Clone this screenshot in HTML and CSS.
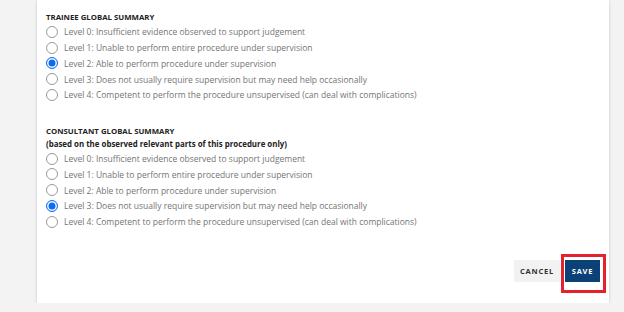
FILE: index.html
```html
<!DOCTYPE html>
<html lang="en">
<head>
    <meta charset="UTF-8">
    <meta name="viewport" content="width=device-width, initial-scale=1.0">
    <title>Global summary</title>
    <link rel="stylesheet" href="styles.css">
</head>
<body>
    <div class="card">

        <!-- TRAINEE -->
        <fieldset class="summary">
            <h3 class="summary__title">Trainee global summary</h3>
            <label class="option"><span class="radio"></span>Level 0: Insufficient evidence observed to support judgement</label>
            <label class="option"><span class="radio"></span>Level 1: Unable to perform entire procedure under supervision</label>
            <label class="option"><span class="radio radio--checked"></span>Level 2: Able to perform procedure under supervision</label>
            <label class="option"><span class="radio"></span>Level 3: Does not usually require supervision but may need help occasionally</label>
            <label class="option"><span class="radio"></span>Level 4: Competent to perform the procedure unsupervised (can deal with complications)</label>
        </fieldset>

        <!-- CONSULTANT -->
        <fieldset class="summary summary--second">
            <h3 class="summary__title">Consultant global summary</h3>
            <p class="summary__sub">(based on the observed relevant parts of this procedure only)</p>
            <label class="option"><span class="radio"></span>Level 0: Insufficient evidence observed to support judgement</label>
            <label class="option"><span class="radio"></span>Level 1: Unable to perform entire procedure under supervision</label>
            <label class="option"><span class="radio"></span>Level 2: Able to perform procedure under supervision</label>
            <label class="option"><span class="radio radio--checked"></span>Level 3: Does not usually require supervision but may need help occasionally</label>
            <label class="option"><span class="radio"></span>Level 4: Competent to perform the procedure unsupervised (can deal with complications)</label>
        </fieldset>

        <div class="actions">
            <button class="btn btn--cancel">Cancel</button>
            <button class="btn btn--save">Save</button>
            <span class="highlight"></span>
        </div>
    </div>
</body>
</html>
```

FILE: styles.css
```css
body {
    margin: 0;
    background-color: #f3f3f3;
    font-family: "Open Sans", "Liberation Sans", sans-serif;
}

.card {
    margin-left: 37px;
    width: 554px;
    padding: 11px 9px 21px;
    background-color: white;
    box-shadow: 0 1px 3px rgba(0, 0, 0, 0.18);
}

.summary {
    margin: 0;
    padding: 0;
    border: 0;
}
.summary--second {
    margin-top: 22px;
}
.summary__title {
    margin: 0 0 1px;
    font-size: 7.8px;
    line-height: 12px;
    font-weight: 700;
    text-transform: uppercase;
    color: #222;
}
.summary__sub {
    margin: 1px 0 1px;
    font-size: 7.9px;
    line-height: 12px;
    font-weight: 700;
    color: #222;
}

.option {
    display: flex;
    align-items: center;
    gap: 6px;
    height: 15.75px;
    font-size: 8.5px;
    color: #757575;
    white-space: nowrap;
}

.radio {
    flex: none;
    box-sizing: border-box;
    width: 12px;
    height: 12px;
    border: 1px solid #9a9a9a;
    border-radius: 50%;
    background-color: white;
}
.radio--checked {
    border: 1.5px solid #0a6cf5;
    box-shadow: inset 0 0 0 1.5px white, inset 0 0 0 6px #0a6cf5;
}

.actions {
    display: flex;
    justify-content: flex-end;
    gap: 5px;
    margin-top: 30px;
    position: relative;
}
.btn {
    height: 22px;
    padding: 0;
    border: 0;
    font-family: inherit;
    font-size: 7.5px;
    font-weight: 700;
    letter-spacing: 0.8px;
    text-transform: uppercase;
}
.btn--cancel {
    width: 46px;
    background-color: #f2f2f2;
    color: #333;
}
.btn--save {
    width: 35px;
    background-color: #0c4177;
    color: white;
}

/* annotation box drawn on the screenshot */
.highlight {
    position: absolute;
    right: -6px;
    top: -6px;
    width: 39px;
    height: 33px;
    border: 3px solid #e5222c;
}
```
